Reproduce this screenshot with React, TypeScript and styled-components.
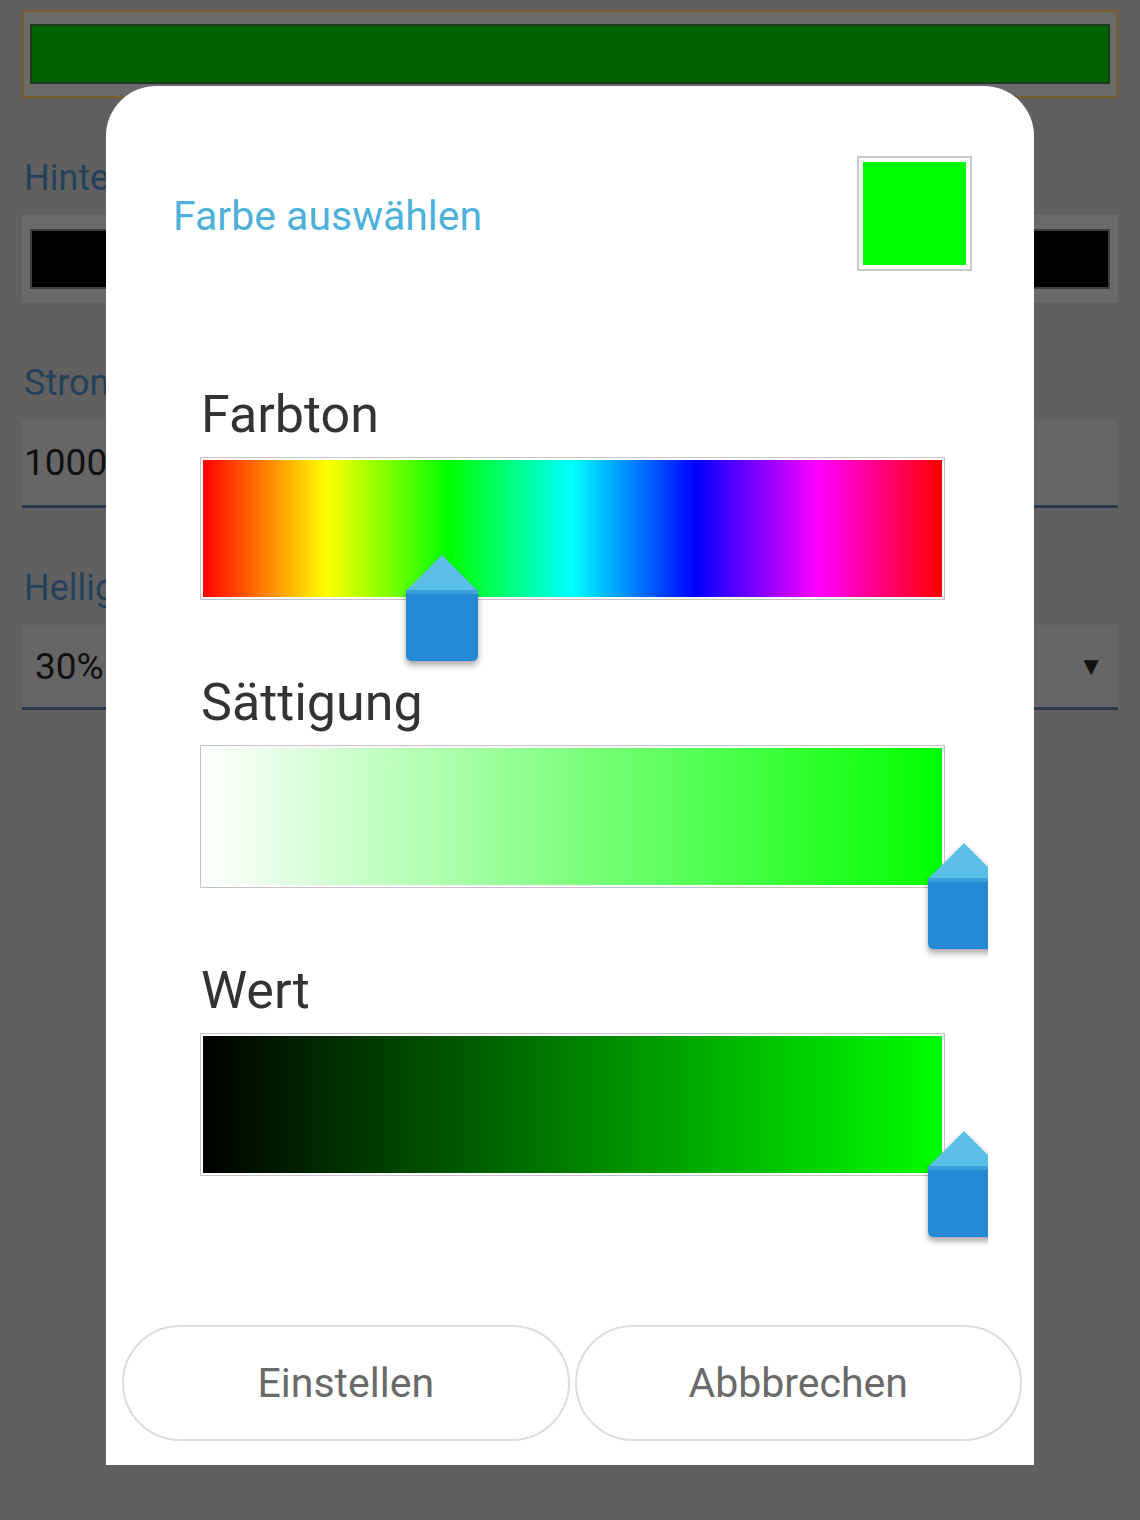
import React from 'react';
import styled, { createGlobalStyle } from 'styled-components';

const GlobalStyle = createGlobalStyle`
  html, body {
    margin: 0;
    padding: 0;
    background: #606060;
    font-family: Roboto, "Noto Sans", "Liberation Sans", sans-serif;
  }
  #root {
    position: relative;
    width: 1140px;
    height: 1520px;
    overflow: hidden;
  }
`;

/* dimmed settings page behind the dialog */

const Page = styled.div`
  display: flex;
  flex-direction: column;
  padding: 10px 22px 0;
`;

const ColorField = styled.div<{ frame: string; fill: string; edge: string }>`
  height: 88px;
  box-sizing: border-box;
  border: 2px solid ${(p) => p.frame};
  background: #6a6a6a;
  padding: 12px 6px;
  display: flex;

  &::before {
    content: '';
    flex: 1;
    background: ${(p) => p.fill};
    border: 2px solid ${(p) => p.edge};
  }
`;

const FieldLabel = styled.div`
  margin: 58px 0 15px 2px;
  font-size: 36px;
  line-height: 44px;
  color: #26405a;
  white-space: nowrap;
`;

const TextInput = styled.div`
  height: 88px;
  box-sizing: border-box;
  background: #666666;
  border-bottom: 3px solid #2b3b4c;
  display: flex;
  align-items: center;
  justify-content: space-between;
  padding: 0 14px 0 2px;
  font-size: 37px;
  color: #101010;
`;

const SelectInput = styled(TextInput)`
  height: 85px;
  padding-left: 13px;
`;

const Caret = styled.span`
  font-size: 26px;
  color: #111;
`;

/* dialog */

const Backdrop = styled.div`
  position: absolute;
  inset: 0;
  display: flex;
  align-items: flex-start;
`;

const Dialog = styled.div`
  margin: 86px 0 0 106px;
  width: 928px;
  height: 1379px;
  box-sizing: border-box;
  background: #ffffff;
  border-radius: 50px 50px 0 0;
  display: flex;
  flex-direction: column;
  padding-top: 70px;
`;

const Header = styled.div`
  display: flex;
  align-items: center;
  justify-content: space-between;
  padding: 0 62px 0 67px;
`;

const Title = styled.h2`
  margin: 4px 0 0;
  font-size: 41px;
  font-weight: 400;
  color: #4db1da;
`;

const Swatch = styled.div<{ color: string }>`
  width: 115px;
  height: 115px;
  box-sizing: border-box;
  border: 2px solid #c9c9c9;
  padding: 4px;

  &::before {
    content: '';
    display: block;
    width: 100%;
    height: 100%;
    background: ${(p) => p.color};
  }
`;

const Sliders = styled.div`
  margin: 113px 0 0 94px;
  width: 788px;
  overflow: hidden;
  padding-bottom: 70px;
  display: flex;
  flex-direction: column;
  gap: 72px;
`;

const SliderBlock = styled.div`
  display: flex;
  flex-direction: column;
`;

const SliderLabel = styled.div`
  margin: 0 0 11px 1px;
  font-size: 52px;
  line-height: 62px;
  color: #333333;
`;

const Track = styled.div`
  position: relative;
  width: 745px;
  height: 143px;
  box-sizing: border-box;
  border: 1px solid #c4c4c4;
  padding: 2px;
  background: #ffffff;
`;

const Fill = styled.div<{ gradient: string }>`
  height: 100%;
  background: ${(p) => p.gradient};
`;

const ThumbWrap = styled.div`
  position: absolute;
  bottom: -62px;
  width: 72px;
  height: 106px;
  filter: drop-shadow(0 4px 3px rgba(0, 0, 0, 0.35));
`;

const Thumb: React.FC<{ value: number }> = ({ value }) => (
  <ThumbWrap style={{ left: -20 + value * 783 - 36 }}>
    <svg width="72" height="106" viewBox="0 0 72 106">
      <path d="M0 36 H72 V100 Q72 106 66 106 H6 Q0 106 0 100 Z" fill="#2389d3" />
      <path d="M0 36 L36 0 L72 36 Z" fill="#5cbfe9" />
      <rect x="0" y="35" width="72" height="4" fill="#3aa0dc" />
    </svg>
  </ThumbWrap>
);

const Buttons = styled.div`
  margin-top: auto;
  display: flex;
  gap: 5px;
  padding: 0 12px 24px 16px;
`;

const PillButton = styled.button`
  flex: 1;
  height: 116px;
  border: 2px solid #dddddd;
  border-radius: 58px;
  background: #ffffff;
  font-family: Roboto, "Noto Sans", "Liberation Sans", sans-serif;
  font-size: 41px;
  color: #6a6a6a;
  padding: 0;
`;

const HUE =
  'linear-gradient(to right, #ff0000 0%, #ffff00 16.67%, #00ff00 33.33%, #00ffff 50%, #0000ff 66.67%, #ff00ff 83.33%, #ff0000 100%)';

const sliders = [
  { label: 'Farbton', gradient: HUE, value: 1 / 3 },
  { label: 'Sättigung', gradient: 'linear-gradient(to right, #ffffff, #00ff00)', value: 1 },
  { label: 'Wert', gradient: 'linear-gradient(to right, #000000, #00ff00)', value: 1 },
];

export default function App() {
  return (
    <>
      <GlobalStyle />
      <Page>
        <ColorField frame="#7b5a2c" fill="#006300" edge="#1d3a1d" />
        <FieldLabel>Hintergrundfarbe</FieldLabel>
        <ColorField frame="#6a6a6a" fill="#000000" edge="#3e3e3e" />
        <FieldLabel>Stromstärke</FieldLabel>
        <TextInput>1000</TextInput>
        <FieldLabel>Helligkeit</FieldLabel>
        <SelectInput>
          <span>30%</span>
          <Caret>▼</Caret>
        </SelectInput>
      </Page>

      <Backdrop>
        <Dialog>
          <Header>
            <Title>Farbe auswählen</Title>
            <Swatch color="#00ff00" />
          </Header>
          <Sliders>
            {sliders.map((s) => (
              <SliderBlock key={s.label}>
                <SliderLabel>{s.label}</SliderLabel>
                <Track>
                  <Fill gradient={s.gradient} />
                  <Thumb value={s.value} />
                </Track>
              </SliderBlock>
            ))}
          </Sliders>
          <Buttons>
            <PillButton>Einstellen</PillButton>
            <PillButton>Abbbrechen</PillButton>
          </Buttons>
        </Dialog>
      </Backdrop>
    </>
  );
}
